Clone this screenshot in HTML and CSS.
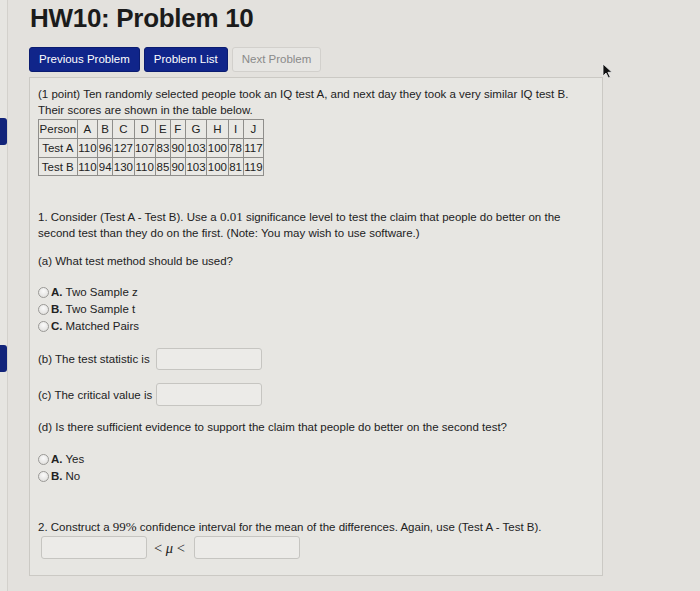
FILE: index.html
```html
<!DOCTYPE html>
<html>
<head>
<meta charset="utf-8">
<link rel="stylesheet" href="styles.css">
</head>
<body>
<div class="page">
  <aside class="sidebar">
    <div class="tab tab-top"></div>
    <div class="tab tab-mid"></div>
  </aside>
  <main class="main">
    <h1 class="title">HW10: Problem 10</h1>
    <nav class="nav">
      <span class="btn btn-primary">Previous Problem</span>
      <span class="btn btn-primary">Problem List</span>
      <span class="btn btn-disabled">Next Problem</span>
    </nav>
    <section class="box">
      <p class="text">(1 point) Ten randomly selected people took an IQ test A, and next day they took a very similar IQ test B. Their scores are shown in the table below.</p>
      <table class="data">
        <tr><td>Person</td><td>A</td><td>B</td><td>C</td><td>D</td><td>E</td><td>F</td><td>G</td><td>H</td><td>I</td><td>J</td></tr>
        <tr><td>Test A</td><td>110</td><td>96</td><td>127</td><td>107</td><td>83</td><td>90</td><td>103</td><td>100</td><td>78</td><td>117</td></tr>
        <tr><td>Test B</td><td>110</td><td>94</td><td>130</td><td>110</td><td>85</td><td>90</td><td>103</td><td>100</td><td>81</td><td>119</td></tr>
      </table>
      <p class="text q1">1. Consider (Test A - Test B). Use a <span class="math">0.01</span> significance level to test the claim that people do better on the second test than they do on the first. (Note: You may wish to use software.)</p>
      <p class="text qa">(a) What test method should be used?</p>
      <ul class="choices choices-a">
        <li><span class="radio"></span><b>A.</b> Two Sample z</li>
        <li><span class="radio"></span><b>B.</b> Two Sample t</li>
        <li><span class="radio"></span><b>C.</b> Matched Pairs</li>
      </ul>
      <div class="ansrow ans-b"><span class="lbl">(b) The test statistic is</span><span class="input"></span></div>
      <div class="ansrow ans-c"><span class="lbl">(c) The critical value is</span><span class="input"></span></div>
      <p class="text qd">(d) Is there sufficient evidence to support the claim that people do better on the second test?</p>
      <ul class="choices choices-d">
        <li><span class="radio"></span><b>A.</b> Yes</li>
        <li><span class="radio"></span><b>B.</b> No</li>
      </ul>
      <p class="text q2">2. Construct a <span class="math">99%</span> confidence interval for the mean of the differences. Again, use (Test A - Test B).</p>
      <div class="interval">
        <span class="input"></span>
        <span class="math mu">&lt; <i>μ</i> &lt;</span>
        <span class="input"></span>
      </div>
    </section>
  </main>
  <svg class="cursor" width="12" height="16" viewBox="0 0 12 16" aria-hidden="true">
    <path d="M1 1 L1 13 L4 10 L6.5 15 L8.3 14.2 L5.9 9.3 L10 9.3 Z" fill="#111" stroke="#eee" stroke-width="0.8"/>
  </svg>
</div>
</body>
</html>
```
FILE: styles.css
```css
html, body {
  margin: 0;
  padding: 0;
  background: #e3e1dd;
  color: #222;
  font-family: "Liberation Sans", Arial, Helvetica, sans-serif;
}

.page {
  display: flex;
  align-items: flex-start;
  min-height: 591px;
  position: relative;
}

.sidebar {
  width: 7px;
  min-height: 591px;
  border-right: 1px solid #d3d1cc;
  background: #e6e5e1;
  display: flex;
  flex-direction: column;
}

.tab {
  width: 7px;
  height: 27px;
  background: #12247a;
  border-radius: 0 3px 3px 0;
}

.tab-top { margin-top: 118px; }
.tab-mid { margin-top: 200px; }

.main {
  padding-left: 21px;
  width: 574px;
}

.title {
  margin: 3px 0 0 1px;
  font-size: 26px;
  line-height: 30px;
  letter-spacing: -0.3px;
  font-weight: bold;
  color: #1b1b1b;
}

.nav {
  display: flex;
  gap: 4px;
  margin-top: 14px;
}

.btn {
  display: block;
  height: 25px;
  padding: 0 9px;
  font-size: 11.5px;
  border-radius: 3px;
  box-sizing: border-box;
}

.btn-primary {
  background: #10258a;
  color: #fff;
  border: 1px solid #0b1c70;
  line-height: 23px;
}

.btn-disabled {
  background: #e7e6e3;
  color: #8a8a8a;
  border: 1px solid #d2d0cc;
  line-height: 23px;
}

.box {
  margin-top: 5px;
  border: 1px solid #cbc9c4;
  background: #e7e6e2;
  padding: 8px 8px 16px;
  font-size: 11.5px;
}

.text {
  margin: 0;
  line-height: 16px;
}

.math {
  font-family: "Liberation Serif", "Times New Roman", serif;
  font-size: 13px;
  line-height: 14px;
}

.data {
  border-collapse: collapse;
  margin-top: 1px;
  font-size: 11.5px;
  background: #e9e8e4;
}

.data td {
  border: 1px solid #8f8e8b;
  padding: 1px 0.6px 0;
  line-height: 16.8px;
  text-align: center;
  white-space: nowrap;
}

.q1 { margin-top: 33px; }
.qa { margin-top: 12px; }
.qd { margin-top: 13px; }
.q2 { margin-top: 34px; }

.choices {
  list-style: none;
  margin: 0;
  padding: 0;
}

.choices-a { margin-top: 15px; }
.choices-d { margin-top: 16px; }

.choices li {
  display: flex;
  align-items: center;
  height: 17px;
  line-height: 17px;
}

.choices b {
  margin-right: 3px;
}

.radio {
  width: 9px;
  height: 9px;
  border: 1px solid #9a9996;
  border-radius: 50%;
  background: radial-gradient(circle at 50% 35%, #fafafa, #dcdbd8);
  margin-right: 2px;
}

.ansrow {
  display: flex;
  align-items: center;
  height: 22px;
  margin-top: 13px;
}

.lbl {
  width: 118px;
  white-space: nowrap;
}

.input {
  display: block;
  width: 106px;
  height: 22px;
  box-sizing: border-box;
  border: 1px solid #c6c5c1;
  border-radius: 3px;
  background: #ecebe8;
}

.ans-c { height: 23px; }
.ans-c .input { height: 23px; }

.interval {
  display: flex;
  align-items: center;
  margin-top: 1px;
  padding-left: 3px;
}

.interval .input {
  height: 23px;
}

.mu {
  margin: 0 9px 0 7px;
  font-size: 14.5px;
  white-space: pre;
}

.cursor {
  position: absolute;
  left: 602px;
  top: 63px;
}
```
